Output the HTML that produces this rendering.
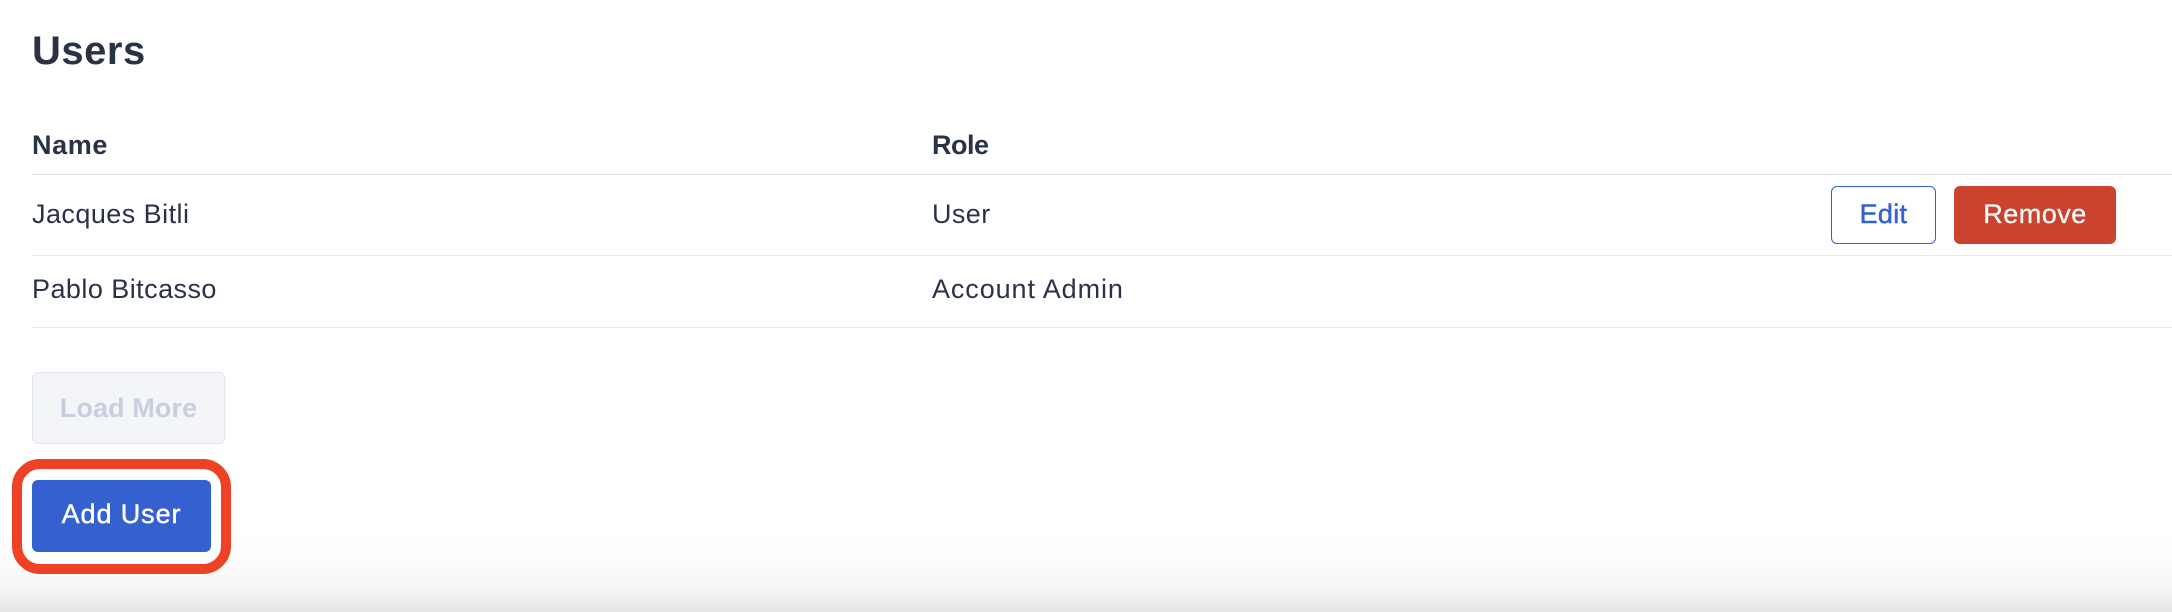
<!DOCTYPE html>
<html>
<head>
<meta charset="utf-8">
<style>
html,body{margin:0;padding:0;background:#fff}
body{position:relative;width:2172px;height:612px;overflow:hidden;font-family:"Liberation Sans",sans-serif;color:#2a3246}
.t{position:absolute;white-space:nowrap;line-height:1}
.b{font-weight:700}
.line{position:absolute;left:32px;right:0;height:1px}
.btn{position:absolute;box-sizing:border-box;display:flex;align-items:center;justify-content:center;white-space:nowrap;font-size:27px;border-radius:6px}
#grad{position:absolute;left:0;right:0;top:535px;height:77px;background:linear-gradient(to bottom,#fff 0%,#fbfbfb 45%,#f4f4f4 72%,#e6e6e6 100%)}
</style>
</head>
<body>
<div id="grad"></div>
<div class="t b" style="left:32px;top:31px;font-size:40px;letter-spacing:.5px">Users</div>
<div class="t b" style="left:32px;top:132px;font-size:27px;letter-spacing:.6px">Name</div>
<div class="t b" style="left:932px;top:132px;font-size:27px;letter-spacing:-.5px">Role</div>
<div class="line" style="top:174px;background:#dbe2ec"></div>
<div class="t" style="left:32px;top:201px;font-size:27px;letter-spacing:.45px">Jacques Bitli</div>
<div class="t" style="left:932px;top:201px;font-size:27px;letter-spacing:.4px">User</div>
<div class="line" style="top:255px;background:#e6e9ee"></div>
<div class="t" style="left:32px;top:276px;font-size:27px;letter-spacing:.45px">Pablo Bitcasso</div>
<div class="t" style="left:932px;top:276px;font-size:27px;letter-spacing:.9px">Account Admin</div>
<div class="line" style="top:327px;background:#e6e9ee"></div>
<div class="btn" style="left:1831px;top:186px;width:105px;height:58px;padding-bottom:2px;border:1.5px solid #3561d0;color:#3561d0;background:#fff;-webkit-text-stroke:.5px #3561d0;letter-spacing:.3px">Edit</div>
<div class="btn" style="left:1954px;top:186px;width:162px;height:58px;padding-bottom:2px;background:#cb432e;color:#fff;letter-spacing:.5px;-webkit-text-stroke:.3px #fff">Remove</div>
<div class="btn b" style="left:32px;top:372px;width:193px;height:72px;background:#f3f5f9;border:1.5px solid #dfe4ef;color:#c6cfe0;font-size:27px;letter-spacing:.1px">Load More</div>
<div style="position:absolute;left:12px;top:459px;width:219px;height:115px;box-sizing:border-box;border:10px solid #ee4227;border-radius:28px;background:#fff"></div>
<div class="btn" style="left:32px;top:480px;width:179px;height:72px;padding-bottom:3px;background:#3561d0;color:#fff;letter-spacing:.9px;-webkit-text-stroke:.4px #fff">Add User</div>
</body>
</html>
